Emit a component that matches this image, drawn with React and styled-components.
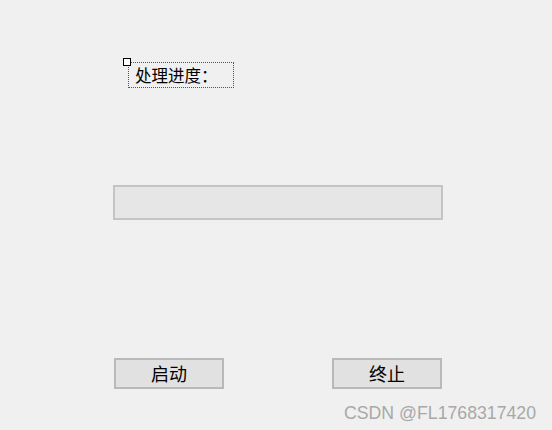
import styled, { createGlobalStyle } from 'styled-components'

const GlobalStyle = createGlobalStyle`
    html, body {
        margin: 0;
        padding: 0;
        background: #f0f0f0;
    }
`;

const Form = styled.div`
    width: 552px;
    height: 430px;
    box-sizing: border-box;
    padding: 62px 0 0 113px;
    display: flex;
    flex-direction: column;
    align-items: flex-start;
    background: #f0f0f0;
    font-family: "Noto Sans CJK SC", "Liberation Sans", sans-serif;
    overflow: hidden;
`;

const LabelWrap = styled.div`
    position: relative;
    margin-left: 15px;
`;

const Label = styled.div`
    width: 106px;
    height: 26px;
    box-sizing: border-box;
    border: 1px dotted #555;
    padding-left: 6px;
    font-size: 16.5px;
    line-height: 24px;
    color: #000;
    white-space: nowrap;
`;

const Handle = styled.span`
    position: absolute;
    left: -5px;
    top: -4px;
    width: 8px;
    height: 8px;
    box-sizing: border-box;
    border: 1px solid #000;
    background: #fff;
`;

const ProgressBar = styled.div`
    margin-top: 97px;
    width: 330px;
    height: 35px;
    box-sizing: border-box;
    border: 2px solid #c4c4c4;
    background: #e6e6e6;
`;

const ButtonRow = styled.div`
    display: flex;
    gap: 108px;
    margin-top: 138px;
    margin-left: 1px;
`;

const Button = styled.button`
    width: 110px;
    height: 31px;
    box-sizing: border-box;
    border: 2px solid #b9b9b9;
    background: #e1e1e1;
    padding: 0;
    font-family: "Noto Sans CJK SC", sans-serif;
    font-size: 18px;
    line-height: 27px;
    color: #000;
`;

const Watermark = styled.div`
    align-self: flex-end;
    margin: 14px 16px 0 0;
    font-family: "Liberation Sans", Arial, sans-serif;
    font-size: 17.7px;
    line-height: 21px;
    color: #a8a8a8;
`;

export default function App() {
    return (
        <>
            <GlobalStyle />
            <Form>
                <LabelWrap>
                    <Label>处理进度：</Label>
                    <Handle />
                </LabelWrap>
                <ProgressBar />
                <ButtonRow>
                    <Button>启动</Button>
                    <Button>终止</Button>
                </ButtonRow>
                <Watermark>CSDN @FL1768317420</Watermark>
            </Form>
        </>
    )
}
